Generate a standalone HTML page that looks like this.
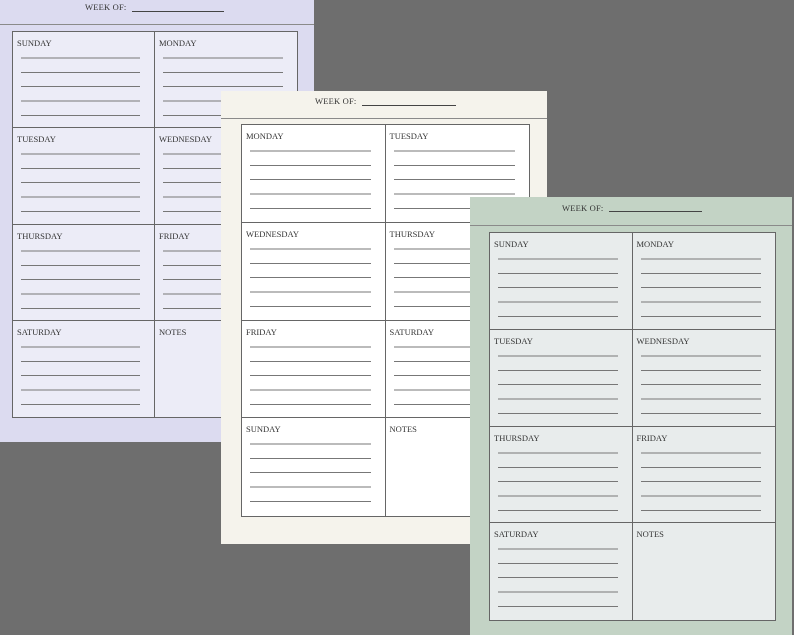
<!DOCTYPE html><html><head><style>
body{margin:0;width:794px;height:635px;background:#6e6e6e;position:relative;overflow:hidden;font-family:"Liberation Serif",serif}
.pg{position:absolute}
.hd{position:absolute;left:0;right:0;border-bottom:1px solid #8a8a8a}
.wk{position:absolute;font-size:8.5px;color:#333;letter-spacing:.2px}
.ul{position:absolute;height:1px;background:#444}
.gr{position:absolute;display:grid;grid-template-columns:1fr 1fr;grid-template-rows:repeat(4,1fr);border:1px solid #666;box-sizing:border-box}
.c{position:relative;border-right:1px solid #666;border-bottom:1px solid #666}
.c:nth-child(2n){border-right:none}.c:nth-child(n+7){border-bottom:none}
.c b{position:absolute;left:4px;top:6px;font-weight:normal;font-size:8.5px;color:#333}
.c i{position:absolute;left:8px;right:14px;top:12px;height:72px;background:repeating-linear-gradient(to bottom,transparent 0 13.4px,#777 13.4px 14.4px)}
</style></head><body>

<div class="pg" style="left:0;top:0;width:314px;height:442px;background:#dcdbf0">
<div class="hd" style="top:0;height:24px"></div>
<div class="wk" style="left:85px;top:2px">WEEK OF:</div><div class="ul" style="left:132px;top:11px;width:92px"></div>
<div class="gr" style="left:12px;top:31px;width:286px;height:387px;background:#ececf7">
<div class="c"><b>SUNDAY</b><i></i></div><div class="c"><b>MONDAY</b><i></i></div>
<div class="c"><b>TUESDAY</b><i></i></div><div class="c"><b>WEDNESDAY</b><i></i></div>
<div class="c"><b>THURSDAY</b><i></i></div><div class="c"><b>FRIDAY</b><i></i></div>
<div class="c"><b>SATURDAY</b><i></i></div><div class="c"><b>NOTES</b></div>
</div></div>

<div class="pg" style="left:221px;top:91px;width:326px;height:453px;background:#f5f3ec">
<div class="hd" style="top:0;height:27px"></div>
<div class="wk" style="left:94px;top:5px">WEEK OF:</div><div class="ul" style="left:141px;top:14px;width:94px"></div>
<div class="gr" style="left:20px;top:33px;width:289px;height:393px;background:#fff">
<div class="c"><b>MONDAY</b><i></i></div><div class="c"><b>TUESDAY</b><i></i></div>
<div class="c"><b>WEDNESDAY</b><i></i></div><div class="c"><b>THURSDAY</b><i></i></div>
<div class="c"><b>FRIDAY</b><i></i></div><div class="c"><b>SATURDAY</b><i></i></div>
<div class="c"><b>SUNDAY</b><i></i></div><div class="c"><b>NOTES</b></div>
</div></div>

<div class="pg" style="left:470px;top:197px;width:322px;height:438px;background:#c3d3c5">
<div class="hd" style="top:0;height:28px"></div>
<div class="wk" style="left:92px;top:6px">WEEK OF:</div><div class="ul" style="left:139px;top:14px;width:93px"></div>
<div class="gr" style="left:19px;top:35px;width:287px;height:389px;background:#e8ecec">
<div class="c"><b>SUNDAY</b><i></i></div><div class="c"><b>MONDAY</b><i></i></div>
<div class="c"><b>TUESDAY</b><i></i></div><div class="c"><b>WEDNESDAY</b><i></i></div>
<div class="c"><b>THURSDAY</b><i></i></div><div class="c"><b>FRIDAY</b><i></i></div>
<div class="c"><b>SATURDAY</b><i></i></div><div class="c"><b>NOTES</b></div>
</div></div>

</body></html>
